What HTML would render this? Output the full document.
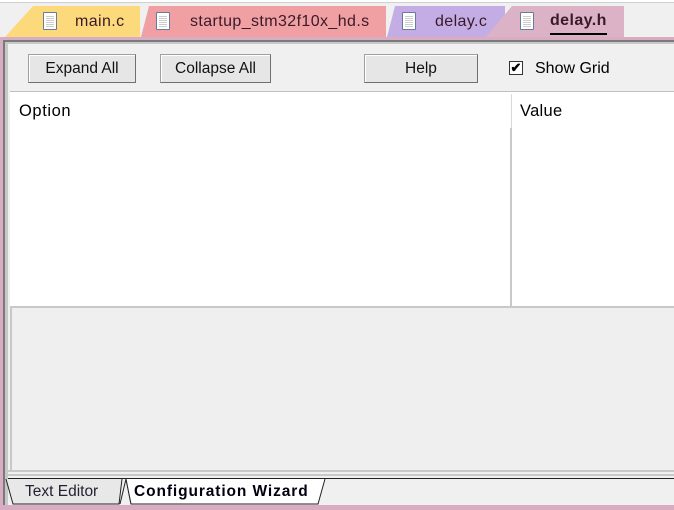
<!DOCTYPE html>
<html><head><style>
*{margin:0;padding:0;box-sizing:border-box}
body{width:674px;height:510px;position:relative;overflow:hidden;background:#f0f0f0;font-family:"Liberation Sans",sans-serif;font-size:15px;color:#000}
.a{position:absolute}
.tab{position:absolute;top:6px;height:31px;font-size:16px;letter-spacing:0.4px;color:#3a1a2a;line-height:31px}
.ic{position:absolute;top:6px;width:14px;height:18px;background:#fff;border:1px solid #6a7a9a;border-radius:1px}
.ic:after{content:"";position:absolute;left:2px;top:2px;width:8px;height:12px;background:repeating-linear-gradient(0deg,#ccc 0 1px,#fff 1px 2px)}
.btn{position:absolute;top:54px;height:29px;background:#e6e6e6;border:1px solid #a0a0a0;border-right-color:#707070;border-bottom-color:#707070;box-shadow:inset 1px 1px 0 #fff;text-align:center;line-height:27px;font-size:15.5px;color:#111}
</style></head><body>
<div class="a" style="left:0;top:0;width:674px;height:3px;background:#fff;border-bottom:1px solid #d0d0d0"></div>
<div class="tab" style="left:5px;width:135px;background:#fcd97a;clip-path:polygon(0 100%,28px 0,100% 0,100% 100%)"><div class="ic" style="left:38px"></div><span class="a" style="left:70px">main.c</span></div>
<div class="tab" style="left:141px;width:245px;background:#f0a0a2;clip-path:polygon(0 100%,8px 0,100% 0,100% 100%)"><div class="ic" style="left:15px"></div><span class="a" style="left:49px;letter-spacing:0.4px">startup_stm32f10x_hd.s</span></div>
<div class="tab" style="left:387px;width:118px;background:#c4ade4;clip-path:polygon(0 100%,8px 0,100% 0,100% 100%)"><div class="ic" style="left:15px"></div><span class="a" style="left:48px">delay.c</span></div>
<div class="tab" style="left:486px;width:138px;background:#dcb2c6;clip-path:polygon(0 100%,26px 0,100% 0,100% 100%)"><div class="ic" style="left:34px"></div><span class="a" style="left:64px;font-weight:bold;border-bottom:2px solid #000;line-height:24px;top:3px">delay.h</span></div>
<div class="a" style="left:0;top:37px;width:674px;height:473px;background:#d8acc2"></div>
<div class="a" style="left:3px;top:40px;width:671px;height:466px;background:#7a7a7a"></div>
<div class="a" style="left:5px;top:42px;width:669px;height:464px;background:#c8c8c8"></div>
<div class="a" style="left:8px;top:44px;width:666px;height:462px;background:#f0f0f0"></div>
<div class="btn" style="left:28px;width:108px">Expand All</div>
<div class="btn" style="left:160px;width:111px">Collapse All</div>
<div class="btn" style="left:364px;width:114px">Help</div>
<div class="a" style="left:509px;top:61px;width:14px;height:14px;background:#fff;border:1px solid #333;font-size:13px;line-height:12px;text-align:center;font-weight:bold">✔</div>
<div class="a" style="left:535px;top:60px;font-size:16px">Show Grid</div>
<div class="a" style="left:10px;top:91px;width:664px;height:1px;background:#c0c0c0"></div>
<div class="a" style="left:10px;top:92px;width:664px;height:214px;background:#fff"></div>
<div class="a" style="left:19px;top:102px;font-size:16.5px;letter-spacing:0.6px">Option</div>
<div class="a" style="left:520px;top:102px;font-size:16.5px;letter-spacing:0.3px">Value</div>
<div class="a" style="left:511px;top:94px;width:1px;height:212px;background:#d8d8d8"></div>
<div class="a" style="left:510px;top:128px;width:2px;height:178px;background:#c8c8c8"></div>
<div class="a" style="left:10px;top:306px;width:664px;height:2px;background:#c8c8c8"></div>
<div class="a" style="left:10px;top:306px;width:2px;height:166px;background:#c8c8c8"></div>
<div class="a" style="left:12px;top:308px;width:662px;height:162px;background:#efefef"></div>
<div class="a" style="left:8px;top:470px;width:666px;height:2px;background:#c8c8c8"></div>
<div class="a" style="left:8px;top:474px;width:666px;height:2px;background:#c8c8c8"></div>
<div class="a" style="left:8px;top:478px;width:666px;height:1px;background:#222"></div>
<svg class="a" style="left:0;top:478px" width="674" height="28">
<path d="M6 1 L13 26 L119 26 L122 1" fill="#e8e8e8" stroke="#222" stroke-width="1"/>
<path d="M120 26 L126 1 L131 26" fill="none" stroke="#222"/>
<path d="M126 1 L131 26 L318 26 L325 1" fill="#fff" stroke="#222"/>
<line x1="8" y1="0.5" x2="674" y2="0.5" stroke="#222"/>
</svg>
<div class="a" style="left:25px;top:483px;font-size:15.5px;color:#223">Text Editor</div>
<div class="a" style="left:134px;top:483px;font-size:15.5px;font-weight:bold;color:#001;letter-spacing:0.9px">Configuration Wizard</div>
<div class="a" style="left:0;top:505px;width:674px;height:5px;background:#d8acc2"></div>
</body></html>
